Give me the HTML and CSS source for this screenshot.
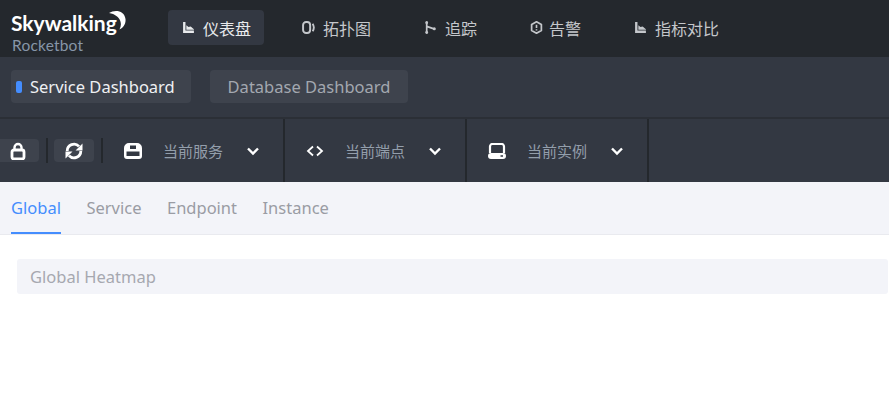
FILE: index.html
```html
<!DOCTYPE html>
<html lang="zh">
<head>
<meta charset="utf-8">
<title>Rocketbot</title>
<link rel="stylesheet" href="styles.css">
</head>
<body>
<header class="topbar">
  <div class="logo">
    <div class="logo-main"><span>Skywalking</span>
      <svg class="moon" viewBox="0 0 18 22" width="18" height="22"><path d="M1 3C7 -1 16.500 .5 17.500 9c.5 4.500-2 8.500-6 10.500 1.500-3 1.800-5.500.8-8.500C11 7 7 4 1 3Z" fill="#fff"/></svg>
    </div>
    <div class="logo-sub">Rocketbot</div>
  </div>
  <nav class="nav">
    <a class="nav-item active nav-a">
      <svg class="nav-icon" viewBox="0 0 12 12"><path d="M1 1h2.200v7.800H11V11H1Z M4 4l2 1.500L8 5l3 2.500V8H4Z" fill="currentColor"/></svg>仪表盘</a>
    <a class="nav-item nav-b">
      <svg class="nav-icon" viewBox="0 0 12 12"><rect x="1" y="1" width="6.500" height="10" rx="2.800" fill="none" stroke="currentColor" stroke-width="1.800"/><path d="M9.800 2.500c1.300 2 1.300 5 0 7" fill="none" stroke="currentColor" stroke-width="1.700"/></svg>拓扑图</a>
    <a class="nav-item nav-c">
      <svg class="nav-icon" viewBox="0 0 12 12"><path d="M2.500 1v10M2.500 5l6 2" fill="none" stroke="currentColor" stroke-width="1.600" stroke-linecap="round"/><circle cx="9.500" cy="7.200" r="1.400" fill="currentColor"/><circle cx="2.500" cy="1.500" r="1.300" fill="currentColor"/><circle cx="2.500" cy="10.500" r="1.300" fill="currentColor"/></svg>追踪</a>
    <a class="nav-item nav-d">
      <svg class="nav-icon" viewBox="0 0 12 12"><path d="M6 .8 10.500 3.300V8.700L6 11.200 1.500 8.700V3.300Z" fill="none" stroke="currentColor" stroke-width="1.600" stroke-linejoin="round"/><path d="M6 3.500v3M6 7.500v1.200" stroke="currentColor" stroke-width="1.500"/></svg>告警</a>
    <a class="nav-item nav-e">
      <svg class="nav-icon" viewBox="0 0 12 12"><path d="M1 1h2.200v7.800H11V11H1Z M4 4l2 1.500L8 5l3 2.500V8H4Z" fill="currentColor"/></svg>指标对比</a>
  </nav>
</header>

<section class="dash-tabs">
  <div class="dash-tab current"><i class="dot"></i>Service Dashboard</div>
  <div class="dash-tab">Database Dashboard</div>
</section>

<section class="toolbar">
  <button class="tool-btn lock">
    <svg viewBox="0 0 16 18" width="16" height="18"><path d="M4.500 8V5.500a3.500 3.500 0 0 1 7 0V8" fill="none" stroke="#fff" stroke-width="2.400"/><rect x="2" y="8" width="12" height="9" rx="2" fill="none" stroke="#fff" stroke-width="2.800"/></svg>
  </button>
  <span class="tool-sep"></span>
  <button class="tool-btn refresh">
    <svg viewBox="0 0 20 20" width="20" height="20"><path d="M3.200 10A6.800 6.800 0 0 1 15 5.400M16.800 10A6.800 6.800 0 0 1 5 14.600" fill="none" stroke="#fff" stroke-width="2.800"/><path d="M18.500 2.500v7h-7ZM1.500 17.500v-7h7Z" fill="#fff"/></svg>
  </button>
  <span class="tool-sep second"></span>
  <div class="selector">
    <svg class="sel-icon" viewBox="0 0 18 16" width="18" height="16"><path fill-rule="evenodd" d="M5 0h8a5 5 0 0 1 5 5v8a3 3 0 0 1-3 3H3a3 3 0 0 1-3-3V5a5 5 0 0 1 5-5ZM6 2.500V6h6V2.500ZM2.500 8.500V13h13V8.500Z" fill="#fff"/></svg>
    <span class="sel-label">当前服务</span>
    <svg class="chev" viewBox="0 0 14 10" width="14" height="10"><path d="M2 2.500 7 7.500 12 2.500" fill="none" stroke="#fff" stroke-width="2.400"/></svg>
  </div>
  <div class="selector">
    <svg class="sel-icon" viewBox="0 0 18 16" width="18" height="16"><path d="M7 3.500 2 8l5 4.500M11 3.500 16 8l-5 4.500" fill="none" stroke="#fff" stroke-width="1.800"/></svg>
    <span class="sel-label">当前端点</span>
    <svg class="chev" viewBox="0 0 14 10" width="14" height="10"><path d="M2 2.500 7 7.500 12 2.500" fill="none" stroke="#fff" stroke-width="2.400"/></svg>
  </div>
  <div class="selector">
    <svg class="sel-icon" viewBox="0 0 18 16" width="18" height="16"><path d="M2 10V3.500A2.500 2.500 0 0 1 4.500 1h9A2.500 2.500 0 0 1 16 3.500V10" fill="none" stroke="#fff" stroke-width="2.200"/><path fill-rule="evenodd" d="M3 10h12a2.800 2.800 0 0 1 0 6H3a2.800 2.800 0 0 1 0-6ZM12.500 12.300v1.400h2.500v-1.400Z" fill="#fff"/></svg>
    <span class="sel-label">当前实例</span>
    <svg class="chev" viewBox="0 0 14 10" width="14" height="10"><path d="M2 2.500 7 7.500 12 2.500" fill="none" stroke="#fff" stroke-width="2.400"/></svg>
  </div>
</section>

<section class="page-tabs">
  <a class="page-tab on">Global</a>
  <a class="page-tab">Service</a>
  <a class="page-tab">Endpoint</a>
  <a class="page-tab">Instance</a>
</section>

<main class="content">
  <div class="panel-title">Global Heatmap</div>
</main>
</body>
</html>
```
FILE: styles.css
```css
* { box-sizing: border-box; }
html, body { margin: 0; height: 100%; overflow: hidden; }
body {
  background: #fff;
  font-family: "Noto Sans", "Noto Sans CJK SC", sans-serif;
}
.topbar {
  height: 57px;
  background: #24282d;
  display: flex;
  align-items: flex-start;
  padding-left: 11px;
}
.logo { width: 157px; padding-top: 10px; flex: none; font-family: Lato, sans-serif; }
.logo-main {
  display: flex;
  align-items: flex-start;
  color: #fff;
  font-size: 21px;
  line-height: 26px;
  font-weight: 700;
  letter-spacing: 0;
  height: 26px;
}
.moon { margin-left: -9px; margin-top: 0; flex: none; }
.logo-sub {
  color: #8796a8;
  font-size: 15.500px;
  line-height: 17px;
  margin-top: 1px;
  margin-left: 1px;
  letter-spacing: 0.2px;
}
.nav { display: flex; padding-top: 10px; }
.nav-item {
  display: flex;
  align-items: center;
  height: 35px;
  border-radius: 4px;
  color: #c4c7cb;
  font-size: 16px;
  white-space: nowrap;
}
.nav-item.active { background: #333842; color: #e8eaec; }
.nav-a { width: 96px; padding-left: 14px; margin-right: 24px; }
.nav-b { width: 124px; padding-left: 14px; }
.nav-c { width: 104px; padding-left: 12px; }
.nav-d { width: 108px; padding-left: 14px; }
.nav-e { padding-left: 10px; }
.nav-icon { width: 13px; height: 13px; margin-right: 8px; flex: none; }
.nav-d .nav-icon { margin-right: 6px; }

.dash-tabs {
  height: 60px;
  background: #333842;
  display: flex;
  gap: 19px;
  padding: 13px 0 0 11px;
}
.dash-tab {
  height: 33px;
  display: flex;
  align-items: center;
  position: relative;
  background: #3e434d;
  border-radius: 4px;
  color: #a3a8b0;
  font-size: 16.500px;
  white-space: nowrap;
}
.dash-tab.current { color: #eef0f3; width: 180px; padding-left: 19px; }
.dash-tab:not(.current) { width: 198px; justify-content: center; }
.dot {
  position: absolute;
  left: 5px;
  top: 11px;
  width: 6px;
  height: 12px;
  border-radius: 2px;
  background: #448dfe;
}

.toolbar {
  height: 65px;
  background: #333842;
  border-top: 2px solid #2b2f36;
  display: flex;
  align-items: stretch;
}
.tool-btn {
  align-self: center;
  height: 23px;
  border: 0;
  padding: 0;
  background: #3e434d;
  border-radius: 4px;
  display: flex;
  align-items: center;
  justify-content: center;
}
.tool-btn.lock { width: 39px; border-radius: 0 4px 4px 0; padding-right: 3px; }
.tool-btn.refresh { width: 40px; }
.tool-sep {
  align-self: center;
  width: 2px;
  height: 25px;
  background: #24282d;
  margin: 0 6px 0 7px;
}
.tool-sep.second { margin-right: 0; }
.selector {
  width: 182px;
  display: flex;
  align-items: center;
  border-right: 2px solid #24282d;
  padding-left: 21px;
}
.sel-icon { flex: none; }
.sel-label {
  margin-left: 21px;
  width: 60px;
  color: #939eab;
  font-size: 15px;
  white-space: nowrap;
}
.chev { margin-left: 23px; flex: none; }

.page-tabs {
  height: 53px;
  background: #f3f4f9;
  border-bottom: 1px solid #e9eaef;
  display: flex;
  gap: 25.500px;
  padding-left: 11px;
}
.page-tab {
  height: 52px;
  line-height: 51px;
  color: #9a9ca4;
  font-size: 16.500px;
}
.page-tab.on { color: #448dfe; border-bottom: 2px solid #448dfe; }

.content { padding: 24px 1px 0 17px; }
.panel-title {
  height: 35px;
  line-height: 35px;
  background: #f3f4f9;
  border-radius: 3px;
  padding-left: 13px;
  color: #a6a8b0;
  font-size: 16.500px;
}
```
